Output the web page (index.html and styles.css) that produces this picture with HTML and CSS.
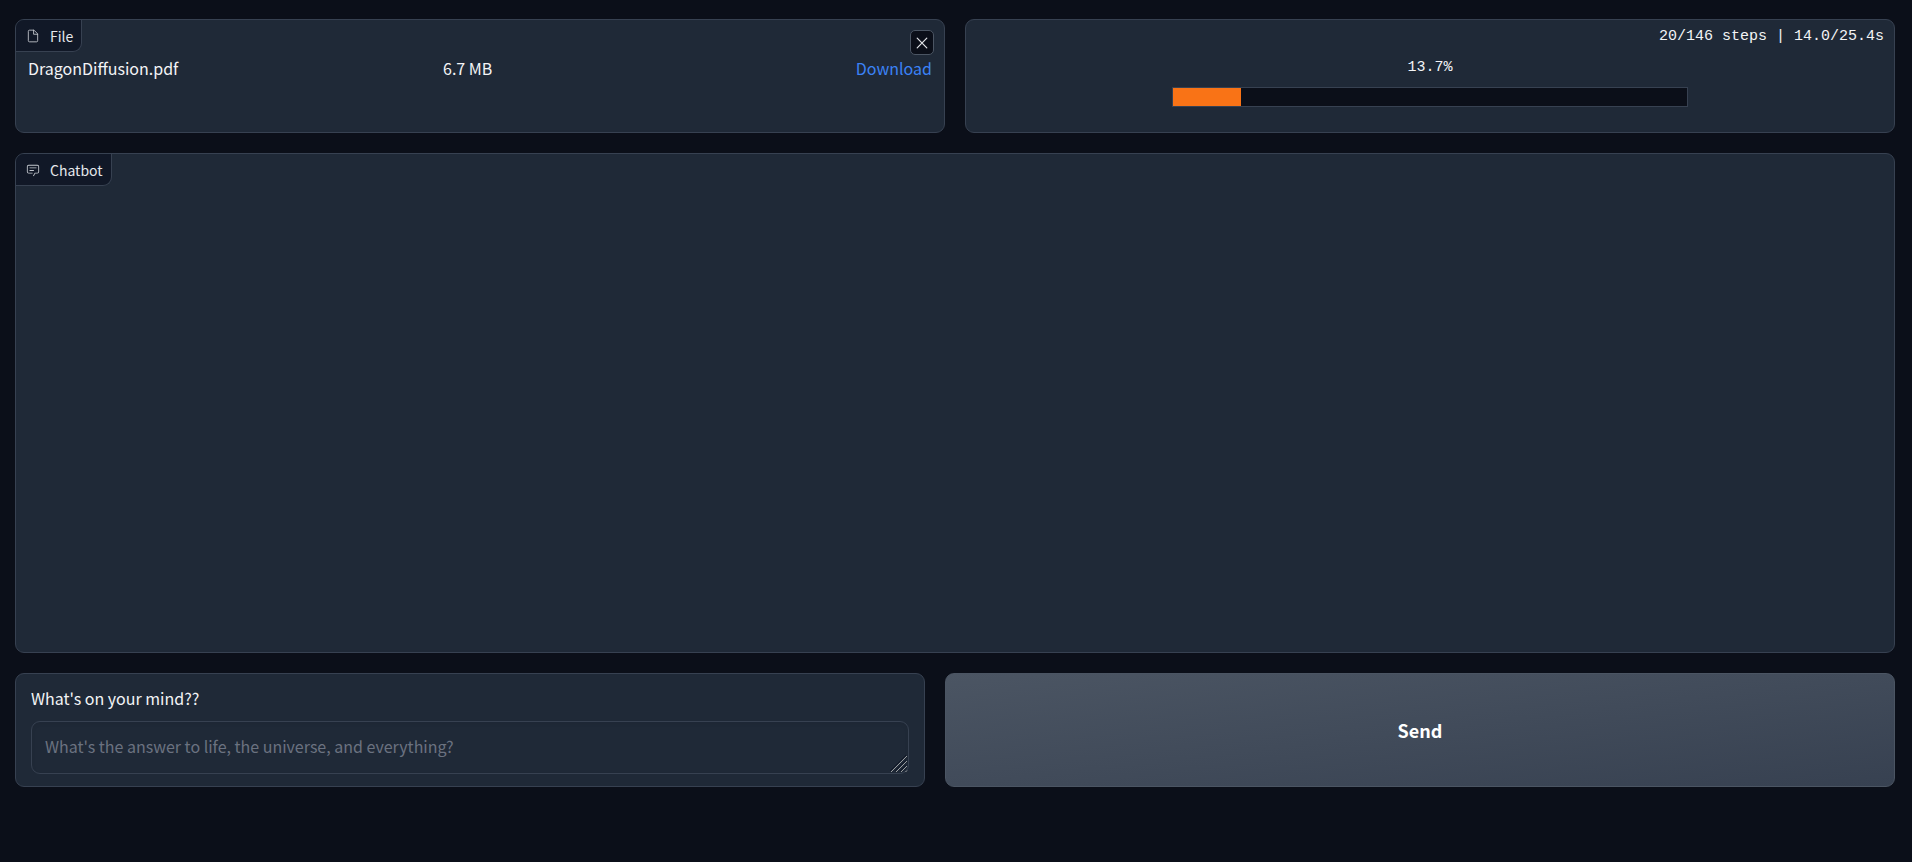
FILE: index.html
```html
<!DOCTYPE html>
<html lang="en">
<head>
    <meta charset="UTF-8">
    <meta name="viewport" content="width=device-width, initial-scale=1.0">
    <title>Chatbot</title>
    <link rel="stylesheet" href="styles.css">
</head>
<body>
    <main class="app">
        <div class="row row-top">
            <section class="block file-block">
                <h2 class="block-label">
                    <svg class="label-icon" viewBox="0 0 24 24" fill="none" stroke="currentColor" stroke-width="1.5" stroke-linecap="round" stroke-linejoin="round">
                        <path d="M13 2H6a2 2 0 0 0-2 2v16a2 2 0 0 0 2 2h12a2 2 0 0 0 2-2V9z"/>
                        <polyline points="13 2 13 9 20 9"/>
                    </svg>
                    File
                </h2>
                <button class="clear-button" type="button" aria-label="Clear">
                    <svg viewBox="0 0 10 10" fill="none" stroke="currentColor" stroke-linecap="round">
                        <path d="M1 1L9 9M9 1L1 9"/>
                    </svg>
                </button>
                <div class="file-row">
                    <span class="file-name">DragonDiffusion.pdf</span>
                    <span class="file-size">6.7 MB</span>
                    <a class="file-download" href="#">Download</a>
                </div>
            </section>

            <section class="block progress-block">
                <div class="progress-meta">20/146 steps | 14.0/25.4s</div>
                <div class="progress-level">13.7%</div>
                <div class="progress-wrap">
                    <div class="progress-bar" style="width: 13.2%"></div>
                </div>
            </section>
        </div>

        <section class="block chat-block">
            <h2 class="block-label">
                <svg class="label-icon" viewBox="0 0 32 32" fill="currentColor">
                    <path d="M17.74 30L16 29l4-7h6a2 2 0 0 0 2-2V8a2 2 0 0 0-2-2H6a2 2 0 0 0-2 2v12a2 2 0 0 0 2 2h9v2H6a4 4 0 0 1-4-4V8a4 4 0 0 1 4-4h20a4 4 0 0 1 4 4v12a4 4 0 0 1-4 4h-4.84Z"/>
                    <path d="M8 10h16v2H8zm0 6h10v2H8z"/>
                </svg>
                Chatbot
            </h2>
        </section>

        <form class="row row-bottom">
            <div class="block input-block">
                <label class="input-label" for="question">What's on your mind??</label>
                <div class="input-wrap">
                    <textarea class="input-box" id="question" rows="1" placeholder="What's the answer to life, the universe, and everything?"></textarea>
                    <svg class="resize-grip" viewBox="0 0 18 18" fill="none">
                        <path stroke="#111827" d="M0 16L16 0M5 16L16 5M10 16L16 10"/>
                        <path stroke="#9a9d9f" d="M1 17L17 1M6 17L17 6M11 17L17 11M15.5 17L17 15.5"/>
                    </svg>
                </div>
            </div>
            <button class="send-button" type="button">Send</button>
        </form>
    </main>
</body>
</html>
```

FILE: styles.css
```css
* {
    box-sizing: border-box;
}
body {
    margin: 0;
    background: #0b0f19;
    color: #f3f4f6;
    font-family: "Noto Sans CJK SC", "Open Sans", sans-serif;
    font-size: 16px;
    line-height: 24px;
}
.app {
    display: flex;
    flex-direction: column;
    gap: 20px;
    padding: 19px 17px 19px 15px;
}
.row {
    display: grid;
    gap: 20px;
    min-height: 114px;
}
.row-top {
    grid-template-columns: 1fr 1fr;
}
.row-bottom {
    grid-template-columns: 91fr 95fr;
}
.block {
    position: relative;
    border: 1px solid #374151;
    border-radius: 9px;
    background: #1f2937;
}

/* label tab in the corner of a block */
.block-label {
    display: flex;
    align-items: center;
    gap: 10px;
    width: fit-content;
    height: 32px;
    margin: 0;
    padding: 0 8px 0 10px;
    border: 1px solid #374151;
    border-width: 0 1px 1px 0;
    border-radius: 8px 0 9px 0;
    background: #111827;
    color: #e5e7eb;
    font-size: 14px;
    font-weight: 400;
}
.label-icon {
    width: 14px;
    height: 14px;
    color: #c3c7ce;
}

.clear-button {
    position: absolute;
    top: 10px;
    right: 10px;
    display: flex;
    align-items: center;
    justify-content: center;
    width: 24px;
    height: 25px;
    padding: 0;
    border: 1px solid #4b5563;
    border-radius: 5px;
    background: #0b0f19;
    color: #e5e7eb;
    cursor: pointer;
}
.clear-button svg {
    width: 12px;
    height: 12px;
}
.file-row {
    display: grid;
    grid-template-columns: 415px 1fr auto;
    padding: 4px 12px;
}
.file-download {
    color: #3b82f6;
    text-decoration: none;
}

.progress-block {
    font-family: "Liberation Mono", monospace;
    font-size: 15px;
}
.progress-meta {
    padding: 5px 10px 0;
    text-align: right;
}
.progress-level {
    margin: 7px 0;
    text-align: center;
}
.progress-wrap {
    width: 55.5%;
    height: 20px;
    margin: 0 auto;
    border: 1px solid #374151;
    background: #0b0f19;
}
.progress-bar {
    height: 100%;
    background: #f97316;
}

.chat-block {
    min-height: 500px;
}

.input-block {
    padding: 12px 15px;
}
.input-label {
    display: block;
    margin-bottom: 11px;
}
.input-wrap {
    position: relative;
    display: flex;
}
.input-box {
    width: 100%;
    height: 53px;
    padding: 12px 13px;
    border: 1px solid #374151;
    border-radius: 9px;
    background: #1f2937;
    box-shadow: inset 0 2px 4px rgba(0, 0, 0, 0.05);
    color: #f3f4f6;
    font: inherit;
    resize: none;
}
.input-box::placeholder {
    color: #6b7280;
}
.resize-grip {
    position: absolute;
    right: 1px;
    bottom: 1px;
    width: 18px;
    height: 18px;
    pointer-events: none;
}
.send-button {
    border: 1px solid #4b5563;
    border-radius: 9px;
    background: linear-gradient(to bottom right, #4b5563, #374151);
    color: white;
    font-family: inherit;
    font-size: 18px;
    font-weight: 600;
    cursor: pointer;
}
```
